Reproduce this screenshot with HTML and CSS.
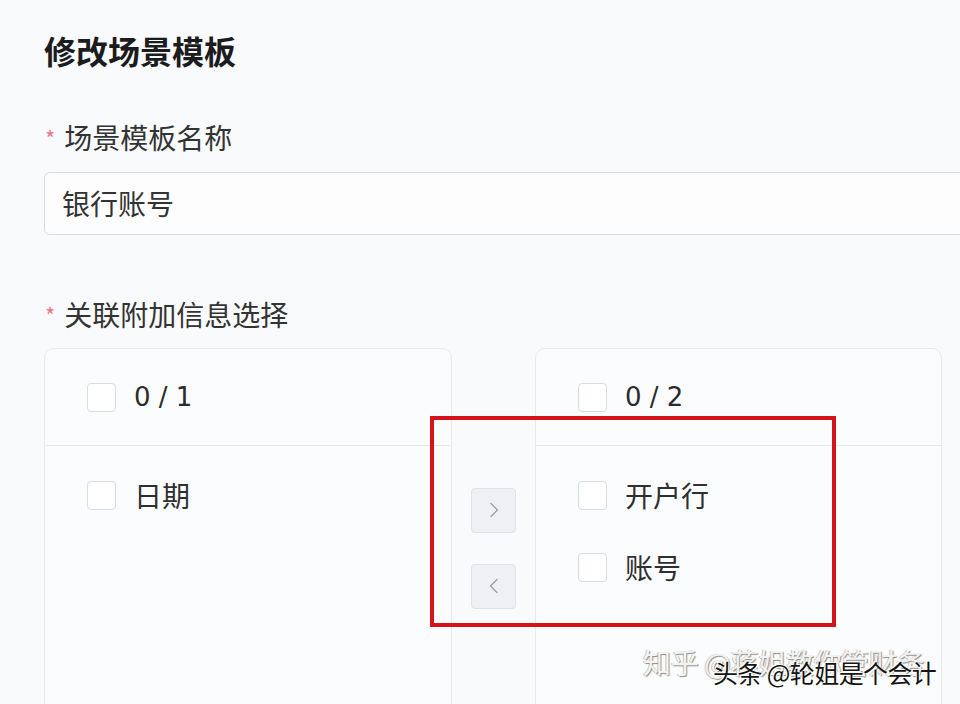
FILE: index.html
```html
<!DOCTYPE html>
<html lang="zh-CN">
<head>
<meta charset="utf-8">
<title>修改场景模板</title>
<link rel="stylesheet" href="styles.css">
</head>
<body>
<div class="page">
  <h1 class="title">修改场景模板</h1>

  <div class="field">
    <div class="label"><span class="req">*</span>场景模板名称</div>
    <div class="input">银行账号</div>
  </div>

  <div class="field field-transfer">
    <div class="label"><span class="req">*</span>关联附加信息选择</div>
    <div class="transfer">
      <div class="panel">
        <div class="panel-head"><span class="cb"></span><span class="count">0 / 1</span></div>
        <div class="panel-body">
          <div class="item"><span class="cb"></span><span>日期</span></div>
        </div>
      </div>
      <div class="buttons">
        <div class="btn">
          <svg width="14" height="16" viewBox="0 0 14 16"><path d="M4 1.5 L10.5 8 L4 14.5" fill="none" stroke="#9a9ea5" stroke-width="1.3" stroke-linecap="round" stroke-linejoin="round"/></svg>
        </div>
        <div class="btn">
          <svg width="14" height="16" viewBox="0 0 14 16"><path d="M10 1.5 L3.5 8 L10 14.5" fill="none" stroke="#9a9ea5" stroke-width="1.3" stroke-linecap="round" stroke-linejoin="round"/></svg>
        </div>
      </div>
      <div class="panel panel-right">
        <div class="panel-head"><span class="cb"></span><span class="count">0 / 2</span></div>
        <div class="panel-body">
          <div class="item"><span class="cb"></span><span>开户行</span></div>
          <div class="item"><span class="cb"></span><span>账号</span></div>
        </div>
      </div>
    </div>
  </div>

  <div class="highlight"></div>
  <div class="wm wm-zhihu">知乎 @蒋姐教你管财务</div>
  <div class="wm wm-toutiao">头条 @轮姐是个会计</div>
</div>
</body>
</html>
```

FILE: styles.css
```css
html, body {
  margin: 0;
  padding: 0;
}

body {
  background: #f9fafc;
  font-family: "Noto Sans CJK SC", "Noto Sans", sans-serif;
  color: #303133;
  width: 960px;
  height: 704px;
  overflow: hidden;
}

.page {
  position: relative;
  box-sizing: border-box;
  height: 704px;
  overflow: hidden;
  padding: 30px 0 0 44px;
}

.title {
  margin: 0 0 47px;
  font-size: 32px;
  line-height: 40px;
  font-weight: 600;
  color: #1c1c1e;
}

.label {
  display: flex;
  align-items: center;
  font-size: 28px;
  line-height: 40px;
  color: #333;
}

.req {
  color: #e9788a;
  font-size: 22px;
  line-height: 22px;
  margin: 0 9px 0 1px;
}

.input {
  box-sizing: border-box;
  margin-top: 15px;
  width: 940px;
  height: 63px;
  border: 1px solid #d8dbe0;
  border-radius: 6px;
  background: #fdfdfe;
  padding-left: 17px;
  font-size: 28px;
  line-height: 61px;
  color: #333;
}

.field-transfer .label {
  margin-top: 59px;
}

.transfer {
  margin-top: 14px;
  display: flex;
  align-items: center;
}

.panel {
  box-sizing: border-box;
  width: 408px;
  height: 400px;
  flex: none;
  border: 1px solid #e6e9ed;
  border-radius: 10px;
  background: #fbfcfd;
}

.panel-right {
  width: 407px;
}

.panel-head {
  box-sizing: border-box;
  height: 97px;
  border-bottom: 1px solid #e4e7eb;
  display: flex;
  align-items: center;
  gap: 18px;
  padding-left: 42px;
  font-size: 28px;
}

.count {
  font-family: "DejaVu Sans", "Noto Sans", sans-serif;
  font-size: 26px;
  color: #2b2b2b;
}

.panel-body {
  padding-top: 13px;
}

.item {
  height: 72px;
  display: flex;
  align-items: center;
  gap: 18px;
  padding-left: 42px;
  font-size: 28px;
  color: #2f2f2f;
}

.cb {
  box-sizing: border-box;
  width: 29px;
  height: 29px;
  flex: none;
  border: 1px solid #d9dce1;
  border-radius: 4px;
  background: #fff;
}

.buttons {
  width: 83px;
  flex: none;
  display: flex;
  flex-direction: column;
  align-items: center;
  gap: 31px;
}

.btn {
  box-sizing: border-box;
  width: 45px;
  height: 45px;
  border: 1px solid #dfe2e6;
  border-radius: 4px;
  background: #eef0f3;
  display: flex;
  align-items: center;
  justify-content: center;
}

.highlight {
  position: absolute;
  left: 430px;
  top: 416px;
  width: 406px;
  height: 211px;
  box-sizing: border-box;
  border: 4px solid #d3151b;
}

.wm {
  position: absolute;
  white-space: nowrap;
  font-family: "Noto Sans CJK SC", sans-serif;
}

.wm-zhihu {
  left: 643px;
  top: 642px;
  font-size: 28px;
  line-height: 40px;
  color: #f3f3f3;
  text-shadow: 1px 1px 1px #8c8c8c, -1px 0 0 #c8c8c8;
  letter-spacing: -0.3px;
}

.wm-toutiao {
  left: 713px;
  top: 654px;
  font-size: 25px;
  line-height: 36px;
  color: #151515;
  letter-spacing: -0.6px;
  text-shadow: 1px 1px 0 #ffffff, -1px -1px 0 #ffffff;
}
```
